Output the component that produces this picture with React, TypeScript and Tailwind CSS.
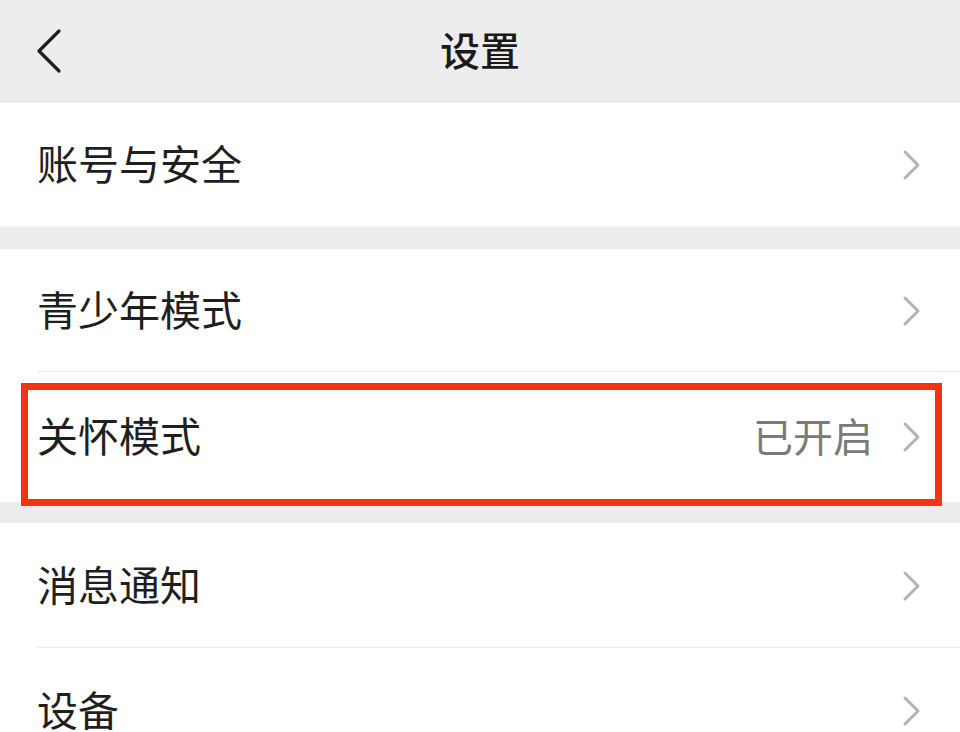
import React from "react";

const cjk = { fontFamily: '"Noto Sans CJK SC", "Noto Sans", sans-serif' };

function Chevron() {
  return (
    <svg width="20" height="32" viewBox="0 0 20 32" className="shrink-0">
      <polyline
        points="4,3 17,16 4,29"
        fill="none"
        stroke="#b4b4b4"
        strokeWidth="3"
        strokeLinecap="round"
        strokeLinejoin="round"
      />
    </svg>
  );
}

function Row({
  label,
  value,
  divider,
  highlight,
  h = "h-[124px]",
}: {
  label: string;
  value?: string;
  divider?: boolean;
  highlight?: boolean;
  h?: string;
}) {
  return (
    <div className={`relative bg-white ${h}`}>
      <div className="flex h-full items-center pl-[37px] pr-[39px]">
        <span className="flex-1 pb-[5px] text-[41px] leading-none text-[#1f1f1f]">{label}</span>
        {value && (
          <span className="mr-[28px] pb-[5px] text-[40px] leading-none text-[#7a7a7a]">{value}</span>
        )}
        <Chevron />
      </div>
      {divider && <div className="absolute bottom-0 left-[37px] right-0 h-px bg-[#ebebeb]" />}
      {highlight && (
        <div className="pointer-events-none absolute left-[21px] right-[18px] top-[11px] bottom-[-4px] border-[7px] border-[#f2350f]" />
      )}
    </div>
  );
}

export default function App() {
  return (
    <div className="h-[732px] w-[960px] overflow-hidden bg-[#ededed]" style={cjk}>
      <header className="relative flex h-[103px] items-center justify-center">
        <svg
          width="30"
          height="46"
          viewBox="0 0 30 46"
          className="absolute left-[33px] top-[28px]"
        >
          <polyline
            points="26,3 6,23 26,43"
            fill="none"
            stroke="#1f1f1f"
            strokeWidth="3.2"
            strokeLinecap="round"
            strokeLinejoin="round"
          />
        </svg>
        <h1 className="pb-[6px] text-[40px] font-medium leading-none text-[#1a1a1a]">设置</h1>
      </header>

      <Row label="账号与安全" />
      <div className="h-[22px]" />
      <Row label="青少年模式" divider h="h-[123px]" />
      <Row label="关怀模式" value="已开启" highlight h="h-[130px]" />
      <div className="h-[21px]" />
      <Row label="消息通知" divider h="h-[125px]" />
      <Row label="设备" h="h-[126px]" />
    </div>
  );
}
